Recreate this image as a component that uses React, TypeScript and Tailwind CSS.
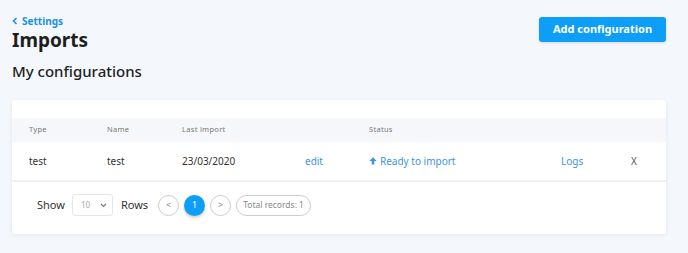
import React from "react";

export default function App() {
  return (
    <div className="w-[688px] h-[253px] bg-[#f4f7fb] overflow-hidden text-[#222]" style={{ fontFamily: '"Noto Sans", "Open Sans", sans-serif' }}>
      <div className="ml-3 w-[654px] pt-[14px]">
        <div className="flex justify-between items-start">
          <div>
            <div className="flex items-center gap-[4px] text-[10px] font-bold text-[#1a90e6] leading-[14px]">
              <svg width="6" height="8" viewBox="0 0 6 8"><path d="M4.5 1 L1.5 4 L4.5 7" fill="none" stroke="#1a90e6" strokeWidth="1.6" /></svg>
              <span>Settings</span>
            </div>
            <div className="text-[19px] font-bold leading-[24px] text-[#1e1e1e]">Imports</div>
          </div>
          <button className="mt-[3px] w-[127px] h-[25px] rounded-[3px] bg-[#0d9ef7] text-white text-[11px] font-bold shadow-[0_1px_3px_rgba(0,0,0,0.12)]">Add configuration</button>
        </div>
        <div className="mt-[9px] text-[15px] font-medium leading-[20px] text-[#1e1e1e]">My configurations</div>
        <div className="mt-[19px] w-[654px] bg-white rounded-[3px] shadow-[0_1px_4px_rgba(30,50,90,0.08)]">
          <div className="h-[18px]"></div>
          <div className="flex items-center h-[24px] bg-[#f5f7fa] text-[7.5px] text-[#777] tracking-[0.3px]">
            <div className="w-[95px] pl-[17px]">Type</div>
            <div className="w-[75px]">Name</div>
            <div className="w-[187px]">Last import</div>
            <div>Status</div>
          </div>
          <div className="flex items-center h-[40px] border-b-2 border-[#eef0f3] text-[10px] text-[#333]">
            <div className="w-[95px] pl-[17px]">test</div>
            <div className="w-[75px]">test</div>
            <div className="w-[123px]">23/03/2020</div>
            <div className="w-[64px] text-[#3e94e0]">edit</div>
            <div className="w-[192px] flex items-center gap-[3px] text-[#3e94e0]">
              <svg width="8" height="8" viewBox="0 0 8 8"><path d="M4 0.3 L7.6 4 L5.3 4 L5.3 7.6 L2.7 7.6 L2.7 4 L0.4 4 Z" fill="#3e94e0" /></svg>
              <span>Ready to import</span>
            </div>
            <div className="w-[70px] text-[#3e94e0]">Logs</div>
            <div className="text-[#555]">X</div>
          </div>
          <div className="flex items-center pt-[12px] pb-[18px] pl-[25px] text-[11px]">
            <span className="text-[#333]">Show</span>
            <div className="ml-[7px] w-[41px] h-[22px] border border-[#e3e6ea] rounded-[3px] flex items-center justify-between pl-[8px] pr-[5px]">
              <span className="text-[8px] text-[#aaa]">10</span>
              <svg width="7" height="5" viewBox="0 0 7 5"><path d="M1 1 L3.5 3.5 L6 1" fill="none" stroke="#777" strokeWidth="1.1" /></svg>
            </div>
            <span className="ml-[8px] text-[#333]">Rows</span>
            <div className="ml-[10px] w-[21px] h-[21px] rounded-full border border-[#ccc] flex items-center justify-center text-[9px] text-[#888]">&lt;</div>
            <div className="ml-[5px] w-[21px] h-[21px] rounded-full bg-[#0d9ef7] flex items-center justify-center text-[9px] text-white shadow-[0_2px_3px_rgba(0,0,0,0.2)]">1</div>
            <div className="ml-[5px] w-[21px] h-[21px] rounded-full border border-[#ccc] flex items-center justify-center text-[9px] text-[#888]">&gt;</div>
            <div className="ml-[5px] h-[21px] px-[6px] rounded-full border border-[#ccc] flex items-center text-[8.5px] text-[#888]">Total records: 1</div>
          </div>
        </div>
      </div>
    </div>
  );
}
